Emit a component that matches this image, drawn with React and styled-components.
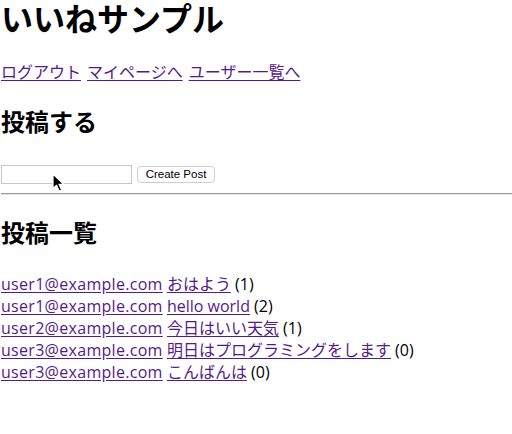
import React from "react";
import styled, { createGlobalStyle } from "styled-components";

const posts = [
    { id: 1, user: "user1@example.com", title: "おはよう", likes: 1 },
    { id: 2, user: "user1@example.com", title: "hello world", likes: 2 },
    { id: 3, user: "user2@example.com", title: "今日はいい天気", likes: 1 },
    { id: 4, user: "user3@example.com", title: "明日はプログラミングをします", likes: 0 },
    { id: 5, user: "user3@example.com", title: "こんばんは", likes: 0 },
];

function App() {
    return (
        <>
            <GlobalStyle />
            <Page>
                <Title>いいねサンプル</Title>
                <NavBar>
                    <Link href="#">ログアウト</Link>
                    <Link href="#">マイページへ</Link>
                    <Link href="#">ユーザー一覧へ</Link>
                </NavBar>
                <SectionTitle>投稿する</SectionTitle>
                <PostForm onSubmit={(e) => e.preventDefault()}>
                    <TextInput type="text" />
                    <SubmitButton type="submit">Create Post</SubmitButton>
                    <Cursor width="13" height="20" viewBox="0 0 13 20">
                        <path
                            d="M1 1 L1 15.5 L4.6 12.2 L7.2 18.2 L9.6 17.1 L7 11.3 L11.8 11.3 Z"
                            fill="#000"
                            stroke="#fff"
                            strokeWidth="1.2"
                            strokeLinejoin="round"
                        />
                    </Cursor>
                </PostForm>
                <Divider />
                <SectionTitle $top={25}>投稿一覧</SectionTitle>
                <PostList>
                    {posts.map((post) => (
                        <PostRow key={post.id}>
                            <Link href="#" $spacing={0.3}>
                                {post.user}
                            </Link>{" "}
                            <Link href="#">{post.title}</Link> ({post.likes})
                        </PostRow>
                    ))}
                </PostList>
            </Page>
        </>
    );
}

export default App;

const GlobalStyle = createGlobalStyle`
    body {
        margin: 0;
        background: #fff;
        color: #000;
        font-family: "Open Sans", "Noto Sans CJK JP", sans-serif;
    }
`;

const Page = styled.div`
    display: flex;
    flex-direction: column;
    padding: 0 0 0 1px;
`;

const Title = styled.h1`
    margin: 0;
    font-family: "Noto Sans CJK JP", sans-serif;
    font-size: 32px;
    font-weight: 700;
    line-height: 34px;
`;

const NavBar = styled.div`
    display: flex;
    column-gap: 6px;
    margin-top: 27px;
    font-size: 16px;
    line-height: 22px;
`;

const Link = styled.a`
    color: #551a8b;
    text-decoration: underline;
    text-underline-offset: 2px;
    letter-spacing: ${(p) => p.$spacing ?? 0}px;
`;

const SectionTitle = styled.h2`
    margin: ${(p) => p.$top ?? 26}px 0 0;
    font-family: "Noto Sans CJK JP", sans-serif;
    font-size: 24px;
    font-weight: 700;
    line-height: 24px;
`;

const PostForm = styled.form`
    position: relative;
    display: flex;
    align-items: flex-start;
    column-gap: 5px;
    margin-top: 32px;
`;

const TextInput = styled.input`
    box-sizing: border-box;
    width: 131px;
    height: 19px;
    margin: 0;
    padding: 0 3px;
    border: 1px solid #c6c6c6;
    border-radius: 0;
    outline: none;
`;

const SubmitButton = styled.button`
    box-sizing: border-box;
    width: 78px;
    height: 17px;
    margin: 1px 0 0;
    padding: 0;
    border: 1px solid #cfcfcf;
    border-radius: 4px;
    background: #fff;
    color: #000;
    font-family: "Liberation Sans", Arial, sans-serif;
    font-size: 11.5px;
    line-height: 15px;
`;

const Cursor = styled.svg`
    position: absolute;
    left: 51px;
    top: 8px;
`;

const Divider = styled.hr`
    margin: 9px 0 0;
    border: none;
    border-top: 1px solid #9a9a9a;
    border-bottom: 1px solid #e4e4e4;
`;

const PostList = styled.div`
    display: flex;
    flex-direction: column;
    margin-top: 29px;
`;

const PostRow = styled.div`
    font-size: 16px;
    line-height: 22px;
    white-space: nowrap;
`;
